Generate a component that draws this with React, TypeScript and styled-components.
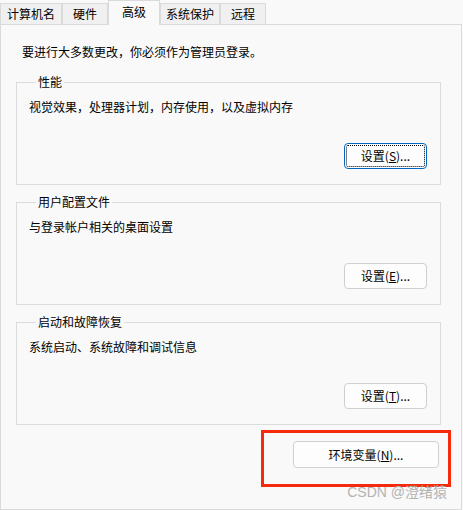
import React from "react";
import styled, { createGlobalStyle, css } from "styled-components";

const Global = createGlobalStyle`
  html, body { margin: 0; padding: 0; background: #f9f9f9; }
  body {
    font-family: "Noto Sans CJK SC", "Microsoft YaHei UI", sans-serif;
    font-size: 12px;
    color: #000;
  }
  * { box-sizing: border-box; }
`;

const Window = styled.div`
  width: 463px;
  height: 510px;
  display: flex;
  flex-direction: column;
  background: #f9f9f9;
`;

const TabBar = styled.div`
  display: flex;
  align-items: flex-end;
  height: 24px;
  background: #f9f9f9;
`;

const Tab = styled.div<{ $active?: boolean; $min?: number }>`
  height: 21px;
  min-width: ${(p) => p.$min ?? 46}px;
  padding: 0 5px;
  display: flex;
  align-items: center;
  justify-content: center;
  line-height: 16px;
  white-space: nowrap;
  border: 1px solid #dadada;
  border-bottom: none;
  background: #f0f0f0;
  ${(p) =>
    p.$active &&
    css`
      height: 25px;
      margin-bottom: -1px;
      padding-bottom: 2px;
      background: #f9f9f9;
      position: relative;
      z-index: 1;
    `}
`;

const Panel = styled.div`
  position: relative;
  width: 462px;
  height: 486px;
  border: 1px solid #dadada;
  background: #f9f9f9;
  padding: 19px 20px 0 15px;
  display: flex;
  flex-direction: column;
`;

const Intro = styled.div`
  line-height: 16px;
  margin-left: 6px;
  margin-bottom: 14px;
`;

const Groups = styled.div`
  display: flex;
  flex-direction: column;
  gap: 9px;
`;

const Group = styled.fieldset`
  margin: 0;
  min-width: 0;
  border: 1px solid #dcdcdc;
  padding: 0 13px 15px 12px;
`;

const Legend = styled.legend`
  margin-left: 7px;
  padding: 0 2px;
  line-height: 16px;
  height: 16px;
`;

const Desc = styled.div`
  line-height: 16px;
  margin-top: 9px;
`;

const ButtonRow = styled.div<{ $top: number }>`
  display: flex;
  justify-content: flex-end;
  margin-top: ${(p) => p.$top}px;
`;

const Button = styled.button<{ $focused?: boolean; $w?: number; $h?: number }>`
  position: relative;
  width: ${(p) => p.$w ?? 83}px;
  height: ${(p) => p.$h ?? 26}px;
  border: 1px solid #d0d0d0;
  border-radius: 4px;
  background: #fdfdfd;
  font-family: inherit;
  font-size: 12px;
  line-height: 16px;
  color: #000;
  padding: 0;
  display: flex;
  align-items: center;
  justify-content: center;
  ${(p) =>
    p.$focused &&
    css`
      border-color: #0067c0;
      &::after {
        content: "";
        position: absolute;
        inset: 1px;
        border: 1px dotted #000;
        border-radius: 2px;
      }
    `}
`;

const Footer = styled.div`
  display: flex;
  justify-content: flex-end;
  margin-top: 16px;
  padding-right: 2px;
`;

const Highlight = styled.div`
  position: absolute;
  left: 260px;
  top: 405px;
  width: 190px;
  height: 57px;
  border: 3px solid #f52a0c;
  pointer-events: none;
`;

const Watermark = styled.div`
  position: absolute;
  right: 14px;
  top: 460px;
  font-family: "Liberation Sans", "Noto Sans CJK SC", sans-serif;
  font-size: 14px;
  line-height: 14px;
  color: #b3b3b3;
  white-space: nowrap;
`;

const groups = [
  { title: "性能", desc: "视觉效果，处理器计划，内存使用，以及虚拟内存", key: "S", focused: true },
  { title: "用户配置文件", desc: "与登录帐户相关的桌面设置", key: "E" },
  { title: "启动和故障恢复", desc: "系统启动、系统故障和调试信息", key: "T" },
];

export default function App() {
  return (
    <>
      <Global />
      <Window>
        <TabBar>
          <Tab $min={62}>计算机名</Tab>
          <Tab>硬件</Tab>
          <Tab $active $min={52}>高级</Tab>
          <Tab $min={58}>系统保护</Tab>
          <Tab>远程</Tab>
        </TabBar>
        <Panel>
          <Intro>要进行大多数更改，你必须作为管理员登录。</Intro>
          <Groups>
            {groups.map((g) => (
              <Group key={g.title}>
                <Legend>{g.title}</Legend>
                <Desc>{g.desc}</Desc>
                <ButtonRow $top={28}>
                  <Button $focused={g.focused}>
                    设置(<u>{g.key}</u>)...
                  </Button>
                </ButtonRow>
              </Group>
            ))}
          </Groups>
          <Footer>
            <Button $w={146} $h={27}>
              环境变量(<u>N</u>)...
            </Button>
          </Footer>
          <Highlight />
          <Watermark>CSDN @澄绪猿</Watermark>
        </Panel>
      </Window>
    </>
  );
}
